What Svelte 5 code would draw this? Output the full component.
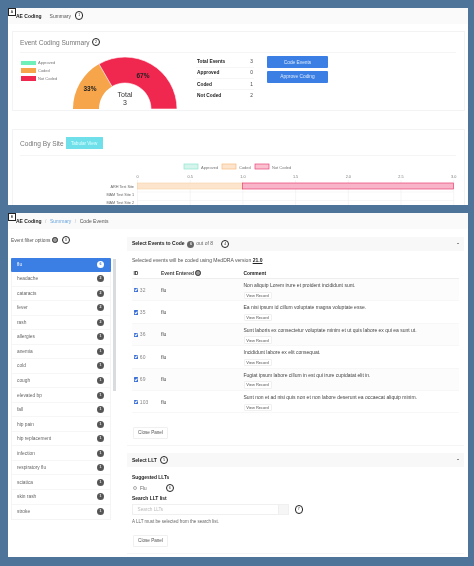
<script>
  const terms = [
    ['flu', 6], ['headache', 2], ['cataracts', 2], ['fever', 2], ['rash', 2], ['allergies', 1],
    ['anemia', 1], ['cold', 1], ['cough', 1], ['elevated bp', 1], ['fall', 1], ['hip pain', 1],
    ['hip replacement', 1], ['infection', 1], ['respiratory flu', 1], ['sciatica', 1], ['skin rash', 1], ['stroke', 1]
  ];
  const events = [
    [32, 'Non aliquip Lorem irure et proident incididunt sunt.'],
    [35, 'Ea nisi ipsum id cillum voluptate magna voluptate esse.'],
    [36, 'Sunt laboris ex consectetur voluptate minim et ut quis labore ex qui ea sunt ut.'],
    [60, 'Incididunt labore ex elit consequat.'],
    [69, 'Fugiat ipsum labore cillum in est qui irure cupidatat elit in.'],
    [103, 'Sunt non et ad nisi quis non et non labore deserunt ea occaecat aliquip minim.']
  ];
  const stats = [['Total Events', 3], ['Approved', 0], ['Coded', 1], ['Not Coded', 2]];
  const ticks = ['0', '0.5', '1.0', '1.5', '2.0', '2.5', '3.0'];
  const sites = ['ARH Test Site', 'MAM Test Site 1', 'MAM Test Site 2'];
</script>

<div class="page">
  <section class="shot a">
    <span class="tag">A</span>
    <div class="crumbs">
      <b>AE Coding</b><span class="here">Summary</span><span class="num">1</span>
    </div>
    <div class="card summary">
      <h2>Event Coding Summary <span class="num big">2</span></h2>
      <div class="summary-body">
        <ul class="legend">
          <li><i class="green"></i>Approved</li>
          <li><i class="orange"></i>Coded</li>
          <li><i class="red"></i>Not Coded</li>
        </ul>
        <svg class="gauge" viewBox="0 0 106 54" width="106" height="54">
          <path d="M1 53 A52 52 0 0 1 27 8 L40 30.5 A26 26 0 0 0 27 53 Z" fill="#f6a54a" />
          <path d="M27 8 A52 52 0 0 1 105 53 L79 53 A26 26 0 0 0 40 30.5 Z" fill="#f0274f" stroke="#fff" stroke-width=".6" />
          <text x="18" y="34.5" class="pct">33%</text>
          <text x="71" y="21.5" class="pct">67%</text>
          <text x="53" y="41" class="total">Total</text>
          <text x="53" y="48.5" class="total">3</text>
        </svg>
        <table class="stats">
          <tbody>
            {#each stats as s}
              <tr><th>{s[0]}</th><td>{s[1]}</td></tr>
            {/each}
          </tbody>
        </table>
        <div class="actions">
          <button class="primary">Code Events</button>
          <button class="primary">Approve Coding</button>
        </div>
      </div>
    </div>
    <div class="card site">
      <h2>Coding By Site <button class="teal">Tabular View</button></h2>
      <svg class="chart" viewBox="0 0 452 50" width="452" height="50">
        <rect x="172" y="5" width="14" height="5" fill="#d5f5ec" stroke="#8fe6cd" stroke-width=".7" />
        <text x="189" y="9.5" class="lg">Approved</text>
        <rect x="210" y="5" width="14" height="5" fill="#fde5cd" stroke="#f6bb80" stroke-width=".7" />
        <text x="227" y="9.5" class="lg">Coded</text>
        <rect x="243" y="5" width="14" height="5" fill="#fbc0d0" stroke="#e8447a" stroke-width=".7" />
        <text x="260" y="9.5" class="lg">Not Coded</text>
        {#each ticks as t, i}
          <line x1={125.5 + i * 52.7} x2={125.5 + i * 52.7} y1="21" y2="50" stroke="#eee" stroke-width=".6" />
          <text x={125.5 + i * 52.7} y="19" class="tick">{t}</text>
        {/each}
        <rect x="125.5" y="24" width="105" height="6" fill="#fde5cd" stroke="#f8cfa4" stroke-width=".6" />
        <rect x="230.5" y="24" width="211" height="6" fill="#f8b4c8" stroke="#e8406f" stroke-width=".7" />
        <line x1="125" x2="442" y1="33" y2="33" stroke="#eee" stroke-width=".5" />
        <line x1="125" x2="442" y1="41.5" y2="41.5" stroke="#eee" stroke-width=".5" />
        {#each sites as s, i}
          <text x="122" y={28.5 + i * 8} class="site-name">{s}</text>
        {/each}
      </svg>
    </div>
  </section>

  <section class="shot b">
    <span class="tag">B</span>
    <div class="crumbs">
      <b>AE Coding</b><span class="sep">/</span><a href="#top">Summary</a><span class="sep">/</span><span class="here2">Code Events</span>
    </div>
    <div class="columns">
      <aside>
        <div class="filter-title">Event filter options <span class="info"></span><span class="num">3</span></div>
        <div class="list-wrap">
          <ul class="terms">
            {#each terms as t, i}
              <li class:active={i === 0}>{t[0]}<span class="badge">{t[1]}</span></li>
            {/each}
          </ul>
          <div class="scrollbar"></div>
        </div>
      </aside>
      <main>
        <div class="panel-head">
          <span><b>Select Events to Code</b> <span class="badge head-badge">6</span> out of 8</span>
          <span class="num head-num">4</span>
          <span class="caret"></span>
        </div>
        <div class="panel-body events">
          <p class="version">Selected events will be coded using MedDRA version <b>21.0</b></p>
          <table class="ev">
            <thead>
              <tr><th class="c1">ID</th><th class="c2">Event Entered <span class="info"></span></th><th>Comment</th></tr>
            </thead>
            <tbody>
              {#each events as e, i}
                <tr class:odd={i % 2 === 0}>
                  <td class="c1"><input type="checkbox" checked /> {e[0]}</td>
                  <td class="c2">flu</td>
                  <td class="cm"><div>{e[1]}</div><button class="plain small">View Record</button></td>
                </tr>
              {/each}
            </tbody>
          </table>
          <button class="plain close">Close Panel</button>
        </div>
        <div class="panel-head llt">
          <span><b>Select LLT</b></span>
          <span class="num llt-num">5</span>
          <span class="caret"></span>
        </div>
        <div class="panel-body form">
          <b class="lbl">Suggested LLTs</b>
          <div class="radio-row"><input type="radio" /> Flu <span class="num">6</span></div>
          <b class="lbl">Search LLT list</b>
          <div class="search-row">
            <div class="search"><span>Search LLTs</span><i></i></div>
            <span class="num">7</span>
          </div>
          <p class="help">A LLT must be selected from the search list.</p>
          <button class="plain close">Close Panel</button>
        </div>
      </main>
    </div>
  </section>
</div>

<style>
  :global(body) {
    margin: 0;
    background: #4e7599;
    font-family: "Liberation Sans", Arial, sans-serif;
  }

  .page {
    width: 474px;
    height: 566px;
    overflow: hidden;
    padding: 7.5px 6px 0 8px;
    box-sizing: border-box;
    color: #444;
    font-size: 4.7px;
    filter: blur(.4px);
  }

  .shot {
    position: relative;
    background: #fff;
    overflow: hidden;
  }
  .a { height: 197.5px; width: 460px; margin-bottom: 8px; }
  .b { height: 344px; width: 459.5px; }

  .tag {
    position: absolute;
    left: 0;
    top: 0;
    width: 6px;
    height: 6px;
    border: 1px solid #222;
    background: #fff;
    font-size: 3.5px;
    line-height: 6px;
    text-align: center;
    color: #222;
  }

  .crumbs {
    height: 16px;
    display: flex;
    align-items: center;
    padding-left: 8px;
    background: #fafafa;
    font-size: 5px;
    color: #555;
  }
  .crumbs b { color: #222; }
  .crumbs .here { margin-left: 8px; }
  .crumbs a { color: #6aa6dc; text-decoration: none; }
  .crumbs .sep { margin: 0 3.5px; color: #bbb; }

  .num {
    display: inline-block;
    width: 6.5px;
    height: 6.5px;
    border: .8px solid #222;
    border-radius: 50%;
    background: #fff;
    color: #222;
    font-size: 3.6px;
    line-height: 6.5px;
    text-align: center;
    font-weight: 400;
    vertical-align: middle;
    margin-left: 4px;
  }

  .card {
    border: 1px solid #f1f3f5;
    margin: 7.5px 3.5px 0 3.5px;
    padding: 0 7.5px;
  }
  h2 {
    margin: 0;
    font-size: 6.6px;
    font-weight: 400;
    color: #777;
    border-bottom: 1px solid #f5f5f5;
    display: flex;
    align-items: center;
  }
  .summary { height: 80px; box-sizing: border-box; }
  .summary h2 { height: 20px; }
  .summary h2 .num { margin-left: 2px; }

  .summary-body { display: flex; position: relative; }

  .legend {
    list-style: none;
    margin: 6px 0 0 1px;
    padding: 0;
    width: 51px;
    font-size: 4px;
    color: #777;
  }
  .legend li { display: flex; align-items: center; height: 7.8px; }
  .legend i { width: 15px; height: 4.6px; margin-right: 2px; }
  .green { background: #6ff0b8; }
  .orange { background: #f6a54a; }
  .red { background: #f0274f; }

  .gauge { margin-top: 3px; flex: none; }
  .pct { font-size: 6.5px; font-weight: 700; fill: #222; text-anchor: middle; }
  .total { font-size: 7px; fill: #333; text-anchor: middle; }

  .stats {
    border-collapse: collapse;
    margin: 3.5px 0 0 18px;
    width: 58px;
    height: 44px;
    font-size: 4.8px;
    flex: none;
    align-self: flex-start;
  }
  .stats th { text-align: left; color: #222; }
  .stats td { text-align: right; padding-right: 1px; color: #444; }
  .stats tr + tr { border-top: 1px solid #f6f6f6; }

  .actions {
    margin: 3px 0 0 13px;
    display: flex;
    flex-direction: column;
    gap: 2.5px;
  }
  button { font-family: inherit; cursor: pointer; padding: 0; }
  .primary {
    width: 61px;
    height: 12px;
    border: 0;
    border-radius: 1px;
    background: #3b7fe4;
    color: #dfeafa;
    font-size: 4.8px;
  }

  .site { margin-top: 18px; height: 90px; box-sizing: border-box; }
  .site h2 { height: 26px; padding-top: 1px; box-sizing: border-box; }
  .teal {
    margin-left: 2px;
    width: 37px;
    height: 12px;
    border: 0;
    background: #6fe0ea;
    color: #dff;
    font-size: 4.6px;
  }
  .chart { display: block; margin: 3px 0 0 -8px; }
  .lg { font-size: 4px; fill: #777; }
  .tick { font-size: 3.8px; fill: #777; text-anchor: middle; }
  .site-name { font-size: 3.8px; fill: #666; text-anchor: end; }

  .columns { display: flex; }
  aside { width: 119px; flex: none; padding-left: 3px; box-sizing: border-box; }
  .filter-title {
    height: 20px;
    display: flex;
    align-items: center;
    font-size: 4.8px;
    color: #555;
    margin-top: 1px;
  }
  .filter-title .info { margin-left: 1.5px; }
  .filter-title .num { margin-left: 4px; }
  .info {
    display: inline-block;
    width: 3.6px;
    height: 3.6px;
    border: .9px solid #333;
    border-radius: 50%;
    background: #999;
    vertical-align: -.5px;
  }

  .list-wrap { display: flex; margin-top: 7.5px; }
  .terms {
    list-style: none;
    margin: 0;
    padding: 0;
    width: 100px;
    flex: none;
    box-sizing: border-box;
    border: 1px solid #f4f4f4;
    border-top: 0;
    font-size: 4.8px;
    color: #666;
  }
  .terms li {
    height: 14.54px;
    display: flex;
    align-items: center;
    justify-content: space-between;
    padding: 0 6px 0 5px;
    box-sizing: border-box;
    border-bottom: 1px solid #f6f6f6;
  }
  .terms li:last-child { border-bottom: 0; }
  .terms .active {
    background: #3b7fe4;
    color: #fff;
    margin: 0 -1px;
    padding: 0 7px 0 6px;
    border-radius: 1px;
    border: 0;
  }
  .badge {
    display: inline-block;
    width: 7px;
    height: 7px;
    border-radius: 50%;
    background: #555;
    color: #eee;
    font-size: 3.6px;
    line-height: 7px;
    text-align: center;
    font-weight: 700;
  }
  .active .badge { background: #fff; color: #3b7fe4; }
  .scrollbar {
    width: 2.5px;
    height: 132px;
    margin-left: 2px;
    margin-top: 1px;
    background: #d8dcdf;
  }

  main { flex: 1; min-width: 0; padding-right: 3.5px; }
  .panel-head {
    position: relative;
    height: 14px;
    margin-top: 8px;
    background: #f8f8f8;
    display: flex;
    align-items: center;
    padding-left: 5px;
    font-size: 5px;
    color: #666;
  }
  .panel-head b { color: #222; }
  .panel-head .badge { background: #666; }
  .head-badge { margin: 0 .5px 0 1.5px; }
  .head-num { margin-left: 8px; }
  .llt-num { margin-left: 3px; }
  .caret {
    position: absolute;
    right: 5px;
    top: 6px;
    border: 1.6px solid transparent;
    border-top-color: #222;
    border-bottom: 0;
  }

  .panel-body { padding: 0 5px; border-bottom: 1px solid #f5f5f5; box-sizing: border-box; }
  .events { height: 195px; }
  .version { margin: 0; height: 14px; padding-top: 7px; box-sizing: border-box; color: #555; font-size: 5.05px; line-height: 5px; }
  .version b { color: #222; text-decoration: underline; }

  .ev {
    border-collapse: collapse;
    width: 100%;
    table-layout: fixed;
    margin-top: 3px;
    font-size: 5px;
    color: #444;
  }
  .ev th { text-align: left; height: 10px; color: #222; padding: 0 0 0 1.5px; border-bottom: 1px solid #eeeeee; font-size: 4.9px; }
  .c1 { width: 26px; }
  .c2 { width: 81px; }
  .ev td { padding: 0 0 0 1.5px; height: 22.4px; box-sizing: border-box; border-bottom: 1px solid #f7f7f7; color: #888; }
  .ev .c2 { color: #444; }
  .ev .cm { color: #444; padding-top: 3px; vertical-align: top; }
  .odd { background: #fcfcfc; }
  input[type="checkbox"] {
    appearance: none;
    position: relative;
    width: 4.4px;
    height: 4.4px;
    margin: 0 .6px 0 0;
    background: #3b6fd8;
    border-radius: .5px;
    vertical-align: -.6px;
  }
  input[type="checkbox"]::after {
    content: "";
    position: absolute;
    left: 1.4px;
    top: .4px;
    width: 1.1px;
    height: 2.2px;
    border: solid #fff;
    border-width: 0 .7px .7px 0;
    transform: rotate(40deg);
  }
  input[type="radio"] {
    appearance: none;
    width: 4px;
    height: 4px;
    margin: 0 2px 0 1px;
    border: .6px solid #aaa;
    border-radius: 50%;
    box-sizing: border-box;
    vertical-align: -.5px;
  }

  .plain {
    border: 1px solid #f0f0f0;
    background: #fff;
    color: #555;
    border-radius: 1px;
  }
  .small {
    display: block;
    width: 28px;
    height: 7.5px;
    margin-top: 3.6px;
    font-size: 4px;
    line-height: 5px;
  }
  .close {
    display: block;
    width: 35px;
    height: 12px;
    margin-top: 13.5px;
    font-size: 4.6px;
    margin-left: 1px;
  }

  .form { height: 87px; display: flex; flex-direction: column; align-items: flex-start; }
  .llt { margin-top: 7px; }
  .lbl { color: #222; font-size: 4.9px; line-height: 5px; }
  .form .lbl:first-child { margin-top: 7.5px; }
  .radio-row { height: 11px; margin: 3px 0 2px; display: flex; align-items: center; color: #666; }
  .radio-row input { margin-right: 3px; }
  .radio-row .num { margin-left: 19px; }
  .search-row { display: flex; align-items: center; margin-top: 3px; }
  .search {
    width: 157px;
    height: 11.5px;
    border: 1px solid #f0f0f0;
    box-sizing: border-box;
    display: flex;
    align-items: center;
    justify-content: space-between;
    padding-left: 4.5px;
    color: #bbb;
  }
  .search i { width: 9px; height: 100%; background: #f6f6f6; border-left: 1px solid #eee; }
  .search-row .num { margin-left: 5.5px; }
  .help { margin: 3.5px 0 0; color: #666; font-size: 4.5px; line-height: 5px; }
  .form .close { margin-top: 11px; }
</style>
